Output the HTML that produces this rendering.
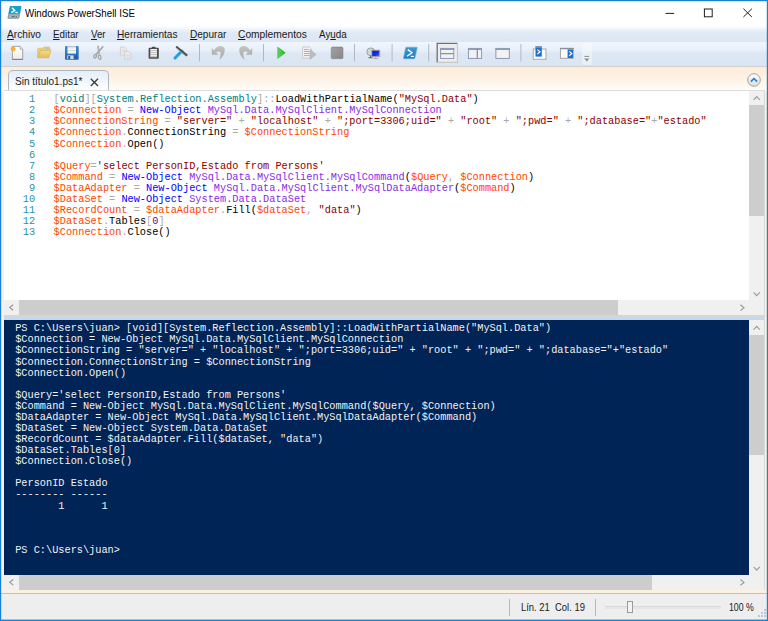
<!DOCTYPE html>
<html><head><meta charset="utf-8">
<style>
*{box-sizing:border-box;margin:0;padding:0}
html,body{width:768px;height:621px;overflow:hidden;background:#fff}
body{font-family:"Liberation Sans",sans-serif;font-size:12px;color:#000;position:relative}
div,span,svg{position:absolute}
#win{left:0;top:0;width:768px;height:621px;background:#fdf0e1;overflow:hidden}
#bl,#br{top:0;width:1px;height:621px;background:#1883d7}
#bl{left:0}#br{left:767px}
#bt,#bb{left:0;width:768px;height:1px;background:#1883d7}
#bt{top:0}#bb{top:620px}
#title{left:1px;top:1px;width:766px;height:25px;background:#fff}
#title .tt{left:24px;top:5px;font-size:11.6px;transform-origin:0 0;color:#000;white-space:nowrap;letter-spacing:0px}
#menu{left:1px;top:26px;width:766px;height:16px;background:linear-gradient(#ffffff 0%,#eef3fa 22%,#e0e9f5 45%,#dde7f4 100%)}
#menu span{top:1.3px;font-size:11.6px;transform-origin:0 0;color:#1a1a1a;white-space:nowrap}
#menu u{text-decoration:underline}
#tool{left:1px;top:42px;width:766px;height:24px;background:linear-gradient(#f1f6fc 0%,#e9f0fa 32%,#dde7f4 48%,#dae5f3 100%)}
.sep{top:44px;width:1px;height:18px;background:#b4bac2}
#toolline{left:1px;top:66px;width:766px;height:1px;background:#d2cfca}
#peach{left:1px;top:67px;width:766px;height:24px;background:linear-gradient(#fdeddb 0%,#fdf0e1 35%,#fffdf9 100%)}
#tab{left:8px;top:70px;width:101px;height:21px;background:linear-gradient(#e4edf9,#fff);border:1px solid #adb6c3;border-bottom:none;border-radius:5px 5px 0 0}
#tab span{left:6px;top:3px;font-size:11.6px;transform-origin:0 0;white-space:nowrap;color:#1a1a1a}
#edtop{left:4px;top:90px;width:760px;height:1px;background:#dcdcdc}
#edit{left:4px;top:91px;width:745px;height:209px;background:#fff;overflow:hidden}
.mono{font-family:"Liberation Mono",monospace;font-size:10.28px;white-space:pre;line-height:11.09px}
.mono div{position:relative;height:11.09px}
.mono span{position:static}
#code{left:18.8px;top:3.2px}
.ln{color:#2b91af}
.v{color:#ff4500}.c{color:#0000ff}.t{color:#8a2be2}.s{color:#8b0000}.g{color:#a9a9a9}.ty{color:#008080}.n{color:#800080}.k{color:#000}
.sb{background:#f0f0f0}
.th{background:#cdcdcd}
#vs1{left:749px;top:91px;width:15px;height:209px}
#hs1{left:4px;top:300px;width:760px;height:15px}
#spl1{left:4px;top:315px;width:760px;height:2px;background:#d9d5cf}
#spl2{left:4px;top:317px;width:760px;height:3px;background:#bfd9f7}
#cons{left:4px;top:320px;width:745px;height:255px;background:#012456;color:#f2f2f2;overflow:hidden}
#ctext{left:11.2px;top:3.3px}
#vs2{left:749px;top:320px;width:15px;height:255px}
#hs2{left:4px;top:575px;width:760px;height:15px}
#rline{left:764px;top:90px;width:1px;height:500px;background:#dcd8d2}
#status{left:1px;top:593px;width:766px;height:27px;background:#eeeeee;border-top:1px solid #c2c1c6}
#status span{font-size:11.6px;transform-origin:0 0;white-space:nowrap;color:#1a1a1a}
</style></head><body>
<div id="win">
<div id="title">
<svg style="left:-1px;top:-1px" width="30" height="26" viewBox="0 0 30 26"><path d="M10.6 5.9H20.8Q21.6 5.9 21.4 6.7L20 14.3H8.2L9.7 6.7Q9.9 5.9 10.6 5.9Z" fill="#17a2ce"/><path d="M8.2 14.3H20L19.3 18Q19.1 18.7 18.4 18.7H8.2Q7.4 18.7 7.5 18Z" fill="#879ba0"/><path d="M9.4 15.6H18.4L18 17.6H9Z" fill="#b3c2c6"/><path d="M11.6 16H14.6V17.2H11.4ZM15.6 16H17V17.2H15.4Z" fill="#5f7277"/><path d="M12 7.8L14.7 10.3L11.4 12.6" stroke="#fff" stroke-width="1.4" fill="none"/><path d="M15.2 12.5H17.9" stroke="#fff" stroke-width="1.2"/></svg>
<span class="tt" style="transform:scaleX(0.84)">Windows PowerShell ISE</span>
<svg style="left:-1px;top:-1px" width="768" height="27" viewBox="0 0 768 27"><g fill="none" stroke="#1f1f1f" stroke-width="1"><path d="M665.5 13.4H674.2"/><rect x="704.4" y="9" width="7.8" height="7.8"/><path d="M743.4 8.7L751.9 17M751.9 8.7L743.4 17"/></g></svg>
</div>
<div id="menu">
<span style="left:5.8px;transform:scaleX(0.877)"><u>A</u>rchivo</span>
<span style="left:52.2px;transform:scaleX(0.845)"><u>E</u>ditar</span>
<span style="left:89.6px;transform:scaleX(0.839)"><u>V</u>er</span>
<span style="left:115.6px;transform:scaleX(0.869)"><u>H</u>erramientas</span>
<span style="left:188.6px;transform:scaleX(0.867)"><u>D</u>epurar</span>
<span style="left:237.1px;transform:scaleX(0.882)"><u>C</u>omplementos</span>
<span style="left:318.3px;transform:scaleX(0.85)">Ay<u>u</u>da</span>
</div>
<div id="tool"></div>
<svg id="icons" style="left:0;top:40px" width="768" height="28" viewBox="0 40 768 28">
<defs>
<linearGradient id="gpage" x1="0" y1="0" x2="0" y2="1"><stop offset="0" stop-color="#ffffff"/><stop offset="1" stop-color="#ececec"/></linearGradient>
<linearGradient id="gfold" x1="0" y1="0" x2="0" y2="1"><stop offset="0" stop-color="#f6dc8c"/><stop offset="1" stop-color="#e3bb55"/></linearGradient>
<linearGradient id="gsave" x1="0" y1="0" x2="0" y2="1"><stop offset="0" stop-color="#3a8ad4"/><stop offset="1" stop-color="#2466ae"/></linearGradient>
<linearGradient id="ggray" x1="0" y1="0" x2="0" y2="1"><stop offset="0" stop-color="#c4c4c4"/><stop offset="1" stop-color="#a6a6a6"/></linearGradient>
<linearGradient id="ggreen" x1="0" y1="0" x2="1" y2="0"><stop offset="0" stop-color="#5ad65a"/><stop offset="1" stop-color="#2fb52f"/></linearGradient>
<linearGradient id="gstop" x1="0" y1="0" x2="1" y2="1"><stop offset="0" stop-color="#a2a2a2"/><stop offset="1" stop-color="#868686"/></linearGradient>
<linearGradient id="gps" x1="0" y1="0" x2="0" y2="1"><stop offset="0" stop-color="#3a9ad8"/><stop offset="1" stop-color="#2279b8"/></linearGradient>
<linearGradient id="gscr" x1="0" y1="0" x2="1" y2="1"><stop offset="0" stop-color="#0a18c8"/><stop offset="0.6" stop-color="#1030f0"/><stop offset="1" stop-color="#5a90f0"/></linearGradient>
</defs>
<!-- new -->
<path d="M12.4 46.4H20L22.7 49.2V59.4H12.4Z" fill="url(#gpage)" stroke="#9a9a9a" stroke-width="0.9"/>
<path d="M12.2 59.4H22.9" stroke="#7d7d7d" stroke-width="1"/>
<path d="M20 46.4V49.2H22.7" fill="#e4e4e4" stroke="#a8a8a8" stroke-width="0.7"/>
<path d="M13.1 45.9L13.9 47.1L15.2 46.8L14.9 48.1L16.1 48.9L14.9 49.7L15.2 51.0L13.9 50.7L13.1 51.9L12.3 50.7L11.0 51.0L11.3 49.7L10.1 48.9L11.3 48.1L11.0 46.8L12.3 47.1Z" fill="#fbb02e"/>
<!-- open -->
<path d="M37.6 57.4V49.2L38.6 48.2H42.6L43.8 47H49.4L50 48.4V50.4H41L37.6 57.4Z" fill="#eccd72" stroke="#d9b85a" stroke-width="0.6"/>
<path d="M45.5 47.6H48.6V49.4H45.5Z" fill="#9cc7d8"/>
<path d="M40.8 50.4H51.2L48.6 57.8H37.6Z" fill="url(#gfold)" stroke="#d6b14e" stroke-width="0.6"/>
<!-- save -->
<rect x="65" y="46" width="13.7" height="13.7" rx="1" fill="url(#gsave)"/>
<rect x="67.5" y="46.4" width="8.5" height="7.2" fill="#f4f4f4"/>
<rect x="67.5" y="46.4" width="8.5" height="1.1" fill="#c9c9c9"/>
<rect x="67.5" y="50" width="8.5" height="0.8" fill="#d8d8d8"/>
<rect x="67.2" y="55.4" width="6.4" height="3.6" fill="#d4dbe3"/>
<rect x="68.2" y="56" width="2" height="3" fill="#2b5c95"/>
<rect x="74.6" y="55.6" width="2.2" height="3.2" fill="#1f5a9c"/>
<!-- cut -->
<g fill="none" stroke-linecap="round">
<path d="M98 46.4L99 53.6" stroke="#b4b4b4" stroke-width="1.9"/>
<path d="M102.7 47L96.4 54" stroke="#a6a6a6" stroke-width="1.8"/>
<ellipse cx="95.1" cy="56.2" rx="1.3" ry="1.8" stroke="#a2a2a2" stroke-width="1.3" transform="rotate(25 95.1 56.2)"/>
<ellipse cx="99.6" cy="57.2" rx="1.3" ry="2.2" stroke="#a8a8a8" stroke-width="1.3" transform="rotate(-5 99.6 57.2)"/>
</g>
<!-- copy -->
<path d="M120.4 47.2H124.6L126.5 49.2V55H120.4Z" fill="#ececec" stroke="#cdcdcd" stroke-width="0.8"/>
<path d="M122 50.2H125M122 52.2H123.6" stroke="#d2d2d2" stroke-width="0.8"/>
<path d="M124.8 51.6H129L130.9 53.6V59.3H124.8Z" fill="#efefef" stroke="#c6c6c6" stroke-width="0.8"/>
<path d="M126.6 55.2H129.4M126.6 57.2H129.4" stroke="#c2c2c2" stroke-width="0.8"/>
<!-- paste -->
<rect x="148.6" y="47.8" width="10.2" height="11" rx="1" fill="#4c4c4c"/>
<rect x="151.8" y="46.8" width="3.8" height="2" rx="0.6" fill="#4c4c4c"/>
<rect x="150.4" y="49" width="6.6" height="8.2" fill="#f2f2f2"/>
<path d="M150.4 50.6H157M150.4 52.6H157M150.4 54.6H157M150.4 56.6H157" stroke="#b8b8b8" stroke-width="0.9"/>
<!-- broom -->
<path d="M181.8 51.2L175 58" stroke="#7cc6ee" stroke-width="3.6" stroke-linecap="round"/>
<path d="M181.8 51.2L175 58" stroke="#1f9be2" stroke-width="2.4" stroke-linecap="round"/>
<path d="M177 47.2L186.4 55" stroke="#4d4d4d" stroke-width="2.1" stroke-linecap="square"/>
<path d="M176.4 48.2L185.4 55.8" stroke="#8aa9bb" stroke-width="0.8"/>
<!-- seps -->
<g fill="#b3b8c0">
<rect x="199" y="44" width="1" height="17.5"/><rect x="263" y="44" width="1" height="17.5"/><rect x="354" y="44" width="1" height="17.5"/><rect x="391.6" y="44" width="1" height="17.5"/><rect x="428.2" y="44" width="1" height="17.5"/><rect x="520.4" y="44" width="1" height="17.5"/>
</g>
<!-- undo / redo -->
<path id="undo" d="M211.75 47.7V54.8H218.3L216.2 52.7C217.6 51.3 219.9 51 220.5 52.6C221.2 55 220.3 57.6 219.2 59.9C223.8 56.2 225.5 51.6 224.5 48.6C223.2 45 217.2 44.8 214 50.2Z" fill="url(#ggray)"/>
<use href="#undo" transform="translate(464 0) scale(-1 1)"/>
<!-- run -->
<path d="M277.2 47.4Q277.2 46.4 278.2 47L284.9 52.1Q285.7 52.8 284.9 53.5L278.2 58.6Q277.2 59.2 277.2 58.2Z" fill="url(#ggreen)"/>
<!-- run selection -->
<path d="M302.6 47H309.4L311.6 49.2V58.2H302.6Z" fill="#f0f0f0" stroke="#c4c4c4" stroke-width="0.8"/>
<path d="M304 49.5H308.6M304 51.5H309.6M304 53.5H309.6M304 55.5H309.6" stroke="#b0b0b0" stroke-width="1"/>
<path d="M310 49.6L316.2 54.4L310 59.2Z" fill="#bcbcbc" stroke="#adadad" stroke-width="0.5"/>
<!-- stop -->
<rect x="331.3" y="47.1" width="11.6" height="11.5" rx="1.2" fill="url(#gstop)" stroke="#808080" stroke-width="0.7"/>
<!-- remote -->
<circle cx="370.8" cy="51.8" r="3.9" fill="#cfd9dc" stroke="#98a3a7" stroke-width="1"/>
<path d="M370.6 55.5V57.6M368.4 57.8H372.6" stroke="#5c6468" stroke-width="1.1"/>
<rect x="371.8" y="50.2" width="7.9" height="6.5" fill="url(#gscr)" stroke="#b5a48e" stroke-width="0.9"/>
<path d="M375.7 56.8V58.2M373.4 58.6H378.2" stroke="#a9a9a9" stroke-width="0.9"/>
<!-- powershell -->
<path d="M406.4 47.2H416.6Q417.4 47.2 417.2 48L414.9 58Q414.7 58.8 413.9 58.8H404Q403.2 58.8 403.5 58L405.6 48Q405.8 47.2 406.4 47.2Z" fill="url(#gps)" stroke="#6bb4e4" stroke-width="0.7"/>
<path d="M407.8 49.6L412 52.8L407 56.3" fill="none" stroke="#fff" stroke-width="1.4"/>
<path d="M410.8 56.4H414" stroke="#fff" stroke-width="1.2"/>
<!-- layout selected -->
<rect x="437.2" y="43.4" width="20.3" height="19" fill="#ededed"/>
<path d="M437.2 62.4V43.4H457.5" fill="none" stroke="#6f6f6f" stroke-width="1.3"/>
<path d="M457.5 43.4V62.4H437.2" fill="none" stroke="#c8c8c8" stroke-width="1.2"/>
<g fill="#f2f2f2" stroke="#8590ab" stroke-width="0.9">
<rect x="440.6" y="48.4" width="13.2" height="10"/>
<rect x="468.4" y="48.4" width="13.2" height="10"/>
<rect x="495.9" y="48.4" width="13.4" height="10"/>
</g>
<g stroke="#8e9bb9" stroke-width="1.9">
<path d="M440.2 49H454.2M468 49H482M495.5 49H509.7"/>
</g>
<path d="M440.6 53.6H453.8M477.3 48.4V58.4" stroke="#8590ab" stroke-width="1.3"/>
<!-- icon A -->
<rect x="533.2" y="49" width="12.8" height="10.3" fill="#fafafa" stroke="#a4a4a4" stroke-width="0.9"/>
<rect x="535.5" y="46.4" width="6.3" height="10.2" fill="#1f70cb"/>
<rect x="535.5" y="46.4" width="6.3" height="1.3" fill="#8a97ab"/>
<path d="M537.4 49.6L540 51.8L537.4 54" fill="none" stroke="#fff" stroke-width="1.2"/>
<!-- icon B -->
<rect x="560.4" y="48.3" width="12.8" height="10" fill="#fafafa" stroke="#9d9d9d" stroke-width="0.9"/>
<path d="M560 48.6H573.6" stroke="#8a8f9c" stroke-width="1.3"/>
<rect x="567.6" y="49.4" width="5.4" height="8.6" fill="#1f70cb"/>
<path d="M569.2 51.4L571.8 53.6L569.2 55.8" fill="none" stroke="#fff" stroke-width="1.2"/>
<!-- overflow -->
<path d="M584.4 56.4H589.2" stroke="#444" stroke-width="1"/>
<path d="M584.2 58.6H589.4L586.8 61.4Z" fill="#444"/>
</svg>

<div style="left:582px;top:42.5px;width:9.5px;height:22px;background:rgba(255,255,255,0.4);border-radius:2px"></div>
<div id="toolline"></div>
<div id="peach"></div>
<div id="tab"><span style="transform:scaleX(0.865)">Sin título1.ps1*</span>
<svg style="left:80.6px;top:7px" width="9" height="9"><path d="M0.8 0.8L8 8M8 0.8L0.8 8" stroke="#3a3a3a" stroke-width="1.3"/></svg>
</div>
<svg style="left:747px;top:73px" width="14" height="14"><defs><linearGradient id="cg" x1="0" y1="0" x2="0" y2="1"><stop offset="0" stop-color="#fff"/><stop offset="1" stop-color="#dcdcdc"/></linearGradient></defs><circle cx="7" cy="7" r="6.3" fill="url(#cg)" stroke="#9a9a9a" stroke-width="0.9"/><path d="M3.8 8.6L7 5.6L10.2 8.6" fill="none" stroke="#2f7fd6" stroke-width="1.7"/></svg>
<div id="edtop"></div>
<div id="edit"><div id="code" class="mono"><div><span class="ln"> 1</span>   <span class="g">[</span><span class="ty">void</span><span class="g">]</span><span class="g">[</span><span class="ty">System.Reflection.Assembly</span><span class="g">]</span><span class="g">::</span><span class="k">LoadWithPartialName(</span><span class="s">"MySql.Data"</span><span class="k">)</span></div><div><span class="ln"> 2</span>   <span class="v">$Connection</span><span class="g"> = </span><span class="c">New-Object</span><span class="k"> </span><span class="t">MySql.Data.MySqlClient.MySqlConnection</span></div><div><span class="ln"> 3</span>   <span class="v">$ConnectionString</span><span class="g"> = </span><span class="s">"server="</span><span class="g"> + </span><span class="s">"localhost"</span><span class="g"> + </span><span class="s">";port=3306;uid="</span><span class="g"> + </span><span class="s">"root"</span><span class="g"> + </span><span class="s">";pwd="</span><span class="g"> + </span><span class="s">";database="</span><span class="g">+</span><span class="s">"estado"</span></div><div><span class="ln"> 4</span>   <span class="v">$Connection</span><span class="g">.</span><span class="k">ConnectionString</span><span class="g"> = </span><span class="v">$ConnectionString</span></div><div><span class="ln"> 5</span>   <span class="v">$Connection</span><span class="g">.</span><span class="k">Open()</span></div><div><span class="ln"> 6</span>   </div><div><span class="ln"> 7</span>   <span class="v">$Query</span><span class="g">=</span><span class="s">'select PersonID,Estado from Persons'</span></div><div><span class="ln"> 8</span>   <span class="v">$Command</span><span class="g"> = </span><span class="c">New-Object</span><span class="k"> </span><span class="t">MySql.Data.MySqlClient.MySqlCommand</span><span class="k">(</span><span class="v">$Query</span><span class="g">, </span><span class="v">$Connection</span><span class="k">)</span></div><div><span class="ln"> 9</span>   <span class="v">$DataAdapter</span><span class="g"> = </span><span class="c">New-Object</span><span class="k"> </span><span class="t">MySql.Data.MySqlClient.MySqlDataAdapter</span><span class="k">(</span><span class="v">$Command</span><span class="k">)</span></div><div><span class="ln">10</span>   <span class="v">$DataSet</span><span class="g"> = </span><span class="c">New-Object</span><span class="k"> </span><span class="t">System.Data.DataSet</span></div><div><span class="ln">11</span>   <span class="v">$RecordCount</span><span class="g"> = </span><span class="v">$dataAdapter</span><span class="g">.</span><span class="k">Fill(</span><span class="v">$dataSet</span><span class="g">, </span><span class="s">"data"</span><span class="k">)</span></div><div><span class="ln">12</span>   <span class="v">$DataSet</span><span class="g">.</span><span class="k">Tables</span><span class="g">[</span><span class="n">0</span><span class="g">]</span></div><div><span class="ln">13</span>   <span class="v">$Connection</span><span class="g">.</span><span class="k">Close()</span></div></div></div>
<div id="vs1" class="sb"><div class="th" style="left:0;top:14px;width:15px;height:111px"></div>
<svg style="left:0;top:0" width="15" height="14"><path d="M4.6 8.9L7.7 5.6L10.8 8.9" fill="none" stroke="#9a9a9a" stroke-width="1.15"/></svg>
<svg style="left:0;top:195px" width="15" height="14"><path d="M4.6 6.3L7.7 9.6L10.8 6.3" fill="none" stroke="#9a9a9a" stroke-width="1.15"/></svg>
</div>
<div id="hs1" class="sb"><div class="th" style="left:15px;top:0;width:599px;height:15px"></div>
<svg style="left:0;top:0" width="15" height="15"><path d="M9.2 4.7L5.7 7.5L9.2 10.3" fill="none" stroke="#9a9a9a" stroke-width="1.15"/></svg>
<svg style="left:730px;top:0" width="15" height="15"><path d="M6.4 4.8L10 7.7L6.4 10.6" fill="none" stroke="#9a9a9a" stroke-width="1.15"/></svg>
</div>
<div id="spl1"></div><div id="spl2"></div>
<div id="cons"><div id="ctext" class="mono"><div>PS C:\Users\juan&gt; [void][System.Reflection.Assembly]::LoadWithPartialName("MySql.Data")</div><div>$Connection = New-Object MySql.Data.MySqlClient.MySqlConnection</div><div>$ConnectionString = "server=" + "localhost" + ";port=3306;uid=" + "root" + ";pwd=" + ";database="+"estado"</div><div>$Connection.ConnectionString = $ConnectionString</div><div>$Connection.Open()</div><div> </div><div>$Query='select PersonID,Estado from Persons'</div><div>$Command = New-Object MySql.Data.MySqlClient.MySqlCommand($Query, $Connection)</div><div>$DataAdapter = New-Object MySql.Data.MySqlClient.MySqlDataAdapter($Command)</div><div>$DataSet = New-Object System.Data.DataSet</div><div>$RecordCount = $dataAdapter.Fill($dataSet, "data")</div><div>$DataSet.Tables[0]</div><div>$Connection.Close()</div><div> </div><div>PersonID Estado</div><div>-------- ------</div><div>       1      1</div><div> </div><div> </div><div> </div><div>PS C:\Users\juan&gt; </div></div></div>
<div id="vs2" class="sb"><div class="th" style="left:0;top:15px;width:15px;height:120px"></div>
<svg style="left:0;top:0" width="15" height="15"><path d="M4.6 9.6L7.7 6.3L10.8 9.6" fill="none" stroke="#9a9a9a" stroke-width="1.15"/></svg>
<svg style="left:0;top:240px" width="15" height="15"><path d="M4.6 6.8L7.7 10.1L10.8 6.8" fill="none" stroke="#9a9a9a" stroke-width="1.15"/></svg>
</div>
<div id="hs2" class="sb"><div class="th" style="left:15px;top:0;width:633px;height:15px"></div>
<svg style="left:0;top:0" width="15" height="15"><path d="M9.2 4.5L5.7 7.3L9.2 10.1" fill="none" stroke="#9a9a9a" stroke-width="1.15"/></svg>
<svg style="left:730px;top:0" width="15" height="15"><path d="M6.4 4.5L10 7.4L6.4 10.3" fill="none" stroke="#9a9a9a" stroke-width="1.15"/></svg>
</div>
<div id="rline"></div>
<div id="status">
<div style="left:508px;top:5px;width:1px;height:17px;background:#b8b8b8"></div>
<span style="left:520px;top:6px;transform:scaleX(0.8126)">Lín. 21&nbsp; Col. 19</span>
<div style="left:594px;top:5px;width:1px;height:17px;background:#b8b8b8"></div>
<div style="left:604px;top:12px;width:116px;height:3px;background:#e6e6e6;border-top:1px solid #d9d9d9"></div>
<div style="left:626px;top:7px;width:6px;height:12px;background:#f4f4f4;border:1px solid #9a9a9a"></div>
<span style="left:728.2px;top:6px;transform:scaleX(0.754)">100 %</span>
<svg style="left:754px;top:14px" width="12" height="12"><g fill="#bcc6d6"><rect x="9" y="1" width="2" height="2"/><rect x="6" y="4" width="2" height="2"/><rect x="9" y="4" width="2" height="2"/><rect x="3" y="7" width="2" height="2"/><rect x="6" y="7" width="2" height="2"/><rect x="9" y="7" width="2" height="2"/></g></svg>
</div>
<svg style="left:0;top:0" width="768" height="621"><g fill="#1883d7"><rect x="0" y="0" width="1.2" height="621"/><rect x="766.8" y="0" width="1.2" height="621"/><rect x="0" y="0" width="768" height="1.2"/><rect x="0" y="619.6" width="768" height="1.4"/></g></svg>
</div>
</body></html>
